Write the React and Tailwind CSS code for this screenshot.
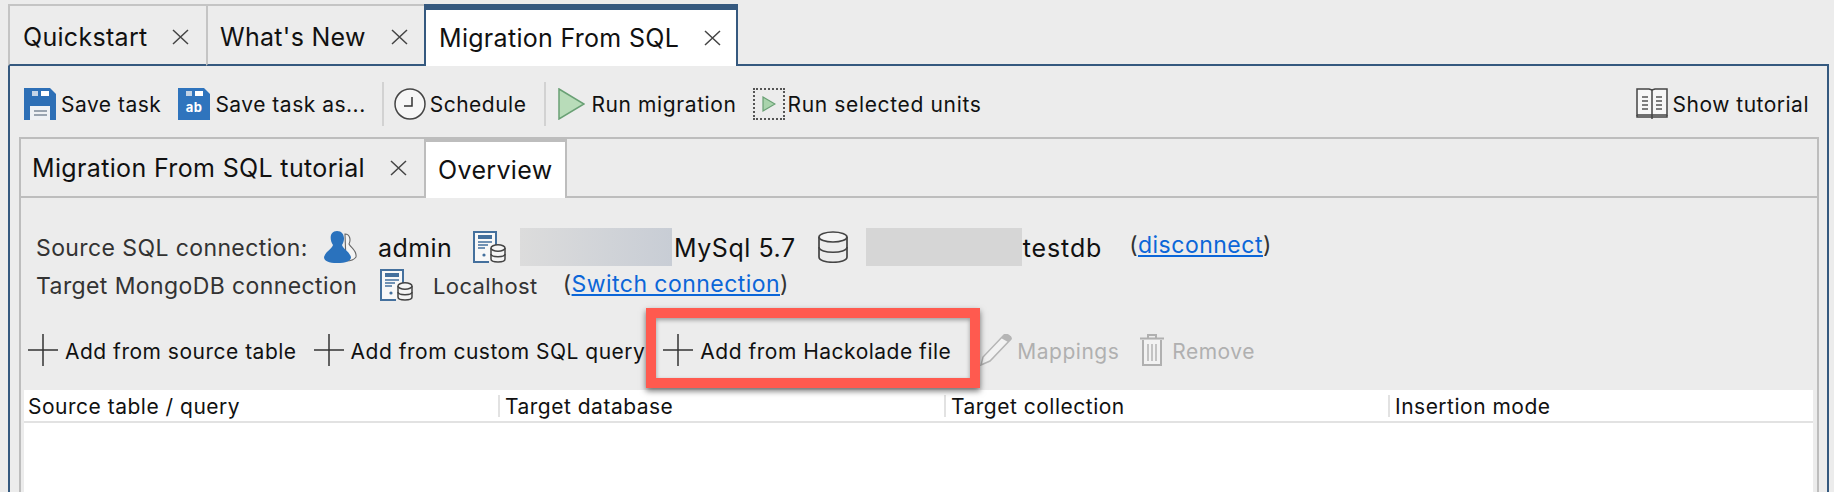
import React from "react";

function CloseIcon() {
  return (
    <svg width="17" height="16" viewBox="0 0 17 16" className="shrink-0">
      <path d="M1 1 L16 15 M16 1 L1 15" stroke="#444" strokeWidth="1.5" fill="none" />
    </svg>
  );
}

function SaveIcon({ ab }) {
  return (
    <svg width="32" height="32" viewBox="0 0 32 32" className="shrink-0">
      <path d="M0 0 H26 L32 6 V32 H0 Z" fill={ab ? "#2f74bd" : "#2d6fb6"} />
      <rect x="8" y="3" width="6" height="5" fill="#c4d4e6" />
      <rect x="17" y="3" width="8" height="5" fill="#fff" />
      {ab ? (
        <text x="16" y="24" textAnchor="middle" fontSize="13" fontWeight="700" fill="#fff" fontFamily="Inter, sans-serif">
          ab
        </text>
      ) : (
        <g>
          <rect x="6" y="18" width="20" height="14" fill="#eef1f5" />
          <path d="M10 23 H23 M10 27 H23" stroke="#7d8b9b" strokeWidth="1.4" />
        </g>
      )}
    </svg>
  );
}

function ClockIcon() {
  return (
    <svg width="32" height="32" viewBox="0 0 32 32" className="shrink-0">
      <circle cx="16" cy="16" r="15" fill="#f6f6f6" stroke="#444" strokeWidth="1.5" />
      <path d="M18 9 V18 H10" fill="none" stroke="#333" strokeWidth="1.5" />
    </svg>
  );
}

function PlayIcon() {
  return (
    <svg width="27" height="32" viewBox="0 0 27 32" className="shrink-0">
      <path d="M1 1 L26 16 L1 31 Z" fill="#b8dcb9" stroke="#69a074" strokeWidth="1.5" />
    </svg>
  );
}

function PlaySelectedIcon() {
  return (
    <div className="flex h-[32px] w-[32px] shrink-0 items-center justify-center border-2 border-dotted border-[#555]">
      <svg width="14" height="16" viewBox="0 0 14 16">
        <path d="M1 1 L13 8 L1 15 Z" fill="#a9d3ac" stroke="#69a074" strokeWidth="1.2" />
      </svg>
    </div>
  );
}

function BookIcon() {
  return (
    <svg width="32" height="32" viewBox="0 0 32 32" className="shrink-0">
      <path d="M1 1 H13 L16 2 L19 1 H31 V27 H1 Z" fill="#f7f7f7" stroke="#444" strokeWidth="1.5" />
      <path d="M16 2 V31" stroke="#444" strokeWidth="1.5" />
      <path d="M1 27 V29 H31 V27" fill="none" stroke="#444" strokeWidth="1.5" />
      <path d="M6 9 H12 M6 13 H12 M6 17 H12 M6 21 H12 M20 9 H26 M20 13 H26 M20 17 H26 M20 21 H26" stroke="#555" strokeWidth="1.5" />
    </svg>
  );
}

function UserIcon() {
  return (
    <svg width="33" height="32" viewBox="0 0 33 32" className="shrink-0">
      <path d="M21 3 C26 3 27 9 25 13 C27 17 33 19 32 26 C30 29 26 30 22 30 Z" fill="#f4f4f4" stroke="#666" strokeWidth="1.1" />
      <path d="M13 0 C20 0 22 8 18 14 C19 18 25 20 27 26 C27 30 22 32 13 32 C5 32 0 30 0 26 C2 20 8 18 9 14 C5 8 6 0 13 0 Z" fill="#2a72bd" />
    </svg>
  );
}

function ServerDbIcon() {
  return (
    <svg width="33" height="32" viewBox="0 0 33 32" className="shrink-0">
      <path d="M23 16 V1 H1 V31 H16" fill="#f8f8f8" stroke="#44709d" strokeWidth="2" />
      <rect x="5" y="4" width="14" height="4" fill="#44709d" />
      <path d="M5 11 H19 M5 14 H15 M5 17 H12" stroke="#44709d" strokeWidth="1.4" />
      <circle cx="11" cy="24" r="1.6" fill="#44709d" />
      <path d="M18 17 V28 C18 32 32 32 32 28 V17" fill="#f4f4f4" stroke="#444" strokeWidth="1.5" />
      <ellipse cx="25" cy="17" rx="7" ry="3.2" fill="#f4f4f4" stroke="#444" strokeWidth="1.5" />
      <path d="M18 23 C18 26.5 32 26.5 32 23" fill="none" stroke="#444" strokeWidth="1.5" />
    </svg>
  );
}

function DbIcon() {
  return (
    <svg width="30" height="32" viewBox="0 0 30 32" className="shrink-0">
      <path d="M1 6 V26 C1 33 29 33 29 26 V6" fill="none" stroke="#444" strokeWidth="1.7" />
      <ellipse cx="15" cy="6" rx="14" ry="5" fill="#f4f4f4" stroke="#444" strokeWidth="1.7" />
      <path d="M1 16 C1 23 29 23 29 16" fill="none" stroke="#444" strokeWidth="1.7" />
    </svg>
  );
}

function PlusIcon() {
  return (
    <svg width="30" height="32" viewBox="0 0 30 32" className="shrink-0">
      <path d="M15 0 V32 M0 16 H30" stroke="#333" strokeWidth="1.5" />
    </svg>
  );
}

function PencilIcon() {
  return (
    <svg width="32" height="32" viewBox="0 0 32 32" className="shrink-0">
      <path d="M24 1 C26 -1 32 3 31 5 L10 27 L1 31 L3 23 Z" fill="#f2f2f2" stroke="#b5b5b5" strokeWidth="1.5" />
      <path d="M24 1 C26 -1 32 3 31 5 L28 8 L21 4 Z" fill="#b5b5b5" />
    </svg>
  );
}

function TrashIcon() {
  return (
    <svg width="24" height="32" viewBox="0 0 24 32" className="shrink-0">
      <path d="M0 4.5 H24 M8 4 V1 H16 V4" fill="none" stroke="#b0b0b0" strokeWidth="2" />
      <path d="M3 6 V31 H21 V6" fill="#f2f2f2" stroke="#b0b0b0" strokeWidth="2" />
      <path d="M8 10 V27 M12 10 V27 M16 10 V27" stroke="#b0b0b0" strokeWidth="1.4" />
    </svg>
  );
}

function Blur({ className }) {
  return <div className={className} />;
}

export default function App() {
  return (
    <div className="h-[492px] w-full overflow-hidden bg-[#ececec] pl-[8px] pr-[5px] pt-[4px] [font-family:Inter,sans-serif] text-[#111]">
      {/* Outer tabs */}
      <div className="flex h-[62px] items-stretch text-[25px] tracking-[0.3px]">
        <div className="flex w-[198px] items-center border-b-2 border-l-2 border-t-2 border-b-[#35597f] border-l-[#c4c4c4] border-t-[#c4c4c4] pl-[13px]">
          <span className="pt-[5px]">Quickstart</span>
          <span className="ml-[25px] pt-[3px]"><CloseIcon /></span>
        </div>
        <div className="flex w-[218px] items-center border-b-2 border-l-2 border-t-2 border-b-[#35597f] border-l-[#c4c4c4] border-t-[#c4c4c4] pl-[12px]">
          <span className="pt-[5px]">What's New</span>
          <span className="ml-[25px] pt-[3px]"><CloseIcon /></span>
        </div>
        <div className="flex w-[314px] items-center border-l-2 border-r-2 border-t-[6px] border-[#35597f] bg-white pl-[13px]">
          <span className="pt-[2px]">Migration From SQL</span>
          <span className="ml-[25px]"><CloseIcon /></span>
        </div>
        <div className="flex-1 border-b-2 border-[#35597f]" />
      </div>

      {/* Panel */}
      <div className="h-[426px] border-l-2 border-r-2 border-[#35597f]">
        <div className="flex h-[71px] items-center pl-[14px] pr-[18px] pt-[4px] text-[21px] tracking-[0.5px]">
          <SaveIcon />
          <span className="ml-[5px] pt-[2px]">Save task</span>
          <span className="ml-[17px]"><SaveIcon ab /></span>
          <span className="ml-[5px] pt-[2px]">Save task as...</span>
          <div className="ml-[16px] h-[44px] w-[2px] bg-[#d2d2d2]" />
          <span className="ml-[10px]"><ClockIcon /></span>
          <span className="ml-[4px] pt-[2px]">Schedule</span>
          <div className="ml-[18px] h-[44px] w-[2px] bg-[#d2d2d2]" />
          <span className="ml-[12px]"><PlayIcon /></span>
          <span className="ml-[6px] pt-[2px] tracking-[0.6px]">Run migration</span>
          <span className="ml-[16px]"><PlaySelectedIcon /></span>
          <span className="ml-[3px] pt-[2px] tracking-[0.65px]">Run selected units</span>
          <span className="ml-auto"><BookIcon /></span>
          <span className="ml-[5px] pt-[2px]">Show tutorial</span>
        </div>

        {/* Inner panel */}
        <div className="ml-[9px] mr-[8px] h-[355px] border-l-2 border-r-2 border-t-2 border-[#bdbdbd]">
          <div className="flex h-[59px] items-stretch text-[25px] tracking-[0.35px]">
            <div className="flex w-[403px] items-center border-b-2 border-[#bdbdbd] pl-[11px]">
              <span className="whitespace-nowrap pt-[3px]">Migration From SQL tutorial</span>
              <span className="ml-[25px]"><CloseIcon /></span>
            </div>
            <div className="flex w-[143px] items-center border-l-2 border-r-2 border-t-[3px] border-[#bdbdbd] bg-white pl-[12px] pt-[2px]">
              Overview
            </div>
            <div className="flex-1 border-b-2 border-[#bdbdbd]" />
          </div>

          {/* Connections */}
          <div className="pl-[15px] pt-[30px] text-[23px] tracking-[0.4px]">
            <div className="flex h-[38px] items-center text-[#333]">
              <span className="w-[288px] whitespace-nowrap pt-[3px]">Source SQL connection:</span>
              <UserIcon />
              <span className="ml-[21px] w-[72px] pt-[3px] text-[25px] text-[#111]">admin</span>
              <span className="ml-[23px]"><ServerDbIcon /></span>
              <Blur className="ml-[14px] h-[38px] w-[152px] bg-linear-to-r from-[#dcdcdc] to-[#c8cdd5]" />
              <span className="ml-[2px] whitespace-nowrap pt-[3px] text-[25px] tracking-[0.55px] text-[#111]">MySql 5.7</span>
              <span className="ml-[22px]"><DbIcon /></span>
              <Blur className="ml-[18px] h-[38px] w-[156px] bg-[#d6d6d6]" />
              <span className="ml-[1px] pt-[3px] text-[25px] tracking-[0.9px] text-[#111]">testdb</span>
              <span className="mb-[4px] ml-[27px] tracking-[0.5px]">(<a className="text-[#0b66d8] underline">disconnect</a>)</span>
            </div>
            <div className="flex h-[38px] items-center text-[#333]">
              <span className="w-[344px] whitespace-nowrap pt-[2px]">Target MongoDB connection</span>
              <ServerDbIcon />
              <span className="ml-[20px] pt-[2px] text-[22px]">Localhost</span>
              <span className="mb-[2px] ml-[25px] tracking-[0.45px]">(<a className="text-[#0b66d8] underline">Switch connection</a>)</span>
            </div>
          </div>

          {/* Unit actions */}
          <div className="relative flex h-[86px] items-center pl-[7px] pt-[6px] text-[21px] tracking-[0.5px]">
            <PlusIcon />
            <span className="ml-[7px] whitespace-nowrap pt-[3px]">Add from source table</span>
            <span className="ml-[17px]"><PlusIcon /></span>
            <span className="ml-[7px] whitespace-nowrap pt-[3px]">Add from custom SQL query</span>
            <span className="ml-[18px]"><PlusIcon /></span>
            <span className="ml-[7px] whitespace-nowrap pt-[3px]">Add from Hackolade file</span>
            <span className="ml-[29px]"><PencilIcon /></span>
            <span className="ml-[5px] pt-[3px] text-[#b0b0b0]">Mappings</span>
            <span className="ml-[21px]"><TrashIcon /></span>
            <span className="ml-[8px] pt-[3px] text-[#b0b0b0]">Remove</span>
            {/* annotation */}
            <div className="absolute left-[625px] top-[4px] h-[80px] w-[334px] border-[10px] border-[#ff5a4f] shadow-[0_3px_6px_rgba(0,0,0,0.55),inset_0_2px_4px_rgba(0,0,0,0.35)]" />
          </div>

          {/* Table */}
          <div className="ml-[3px] mr-[4px] h-[102px] bg-white text-[21px] tracking-[0.5px]">
            <div className="flex h-[33px] items-center border-b-2 border-[#e2e2e2]">
              <div className="w-[474px] pl-[4px] pt-[3px]">Source table / query</div>
              <div className="h-[22px] w-[2px] bg-[#e2e2e2]" />
              <div className="w-[444px] pl-[5px] pt-[3px]">Target database</div>
              <div className="h-[22px] w-[2px] bg-[#e2e2e2]" />
              <div className="w-[442px] pl-[5px] pt-[3px]">Target collection</div>
              <div className="h-[22px] w-[2px] bg-[#e2e2e2]" />
              <div className="pl-[5px] pt-[3px]">Insertion mode</div>
            </div>
          </div>
        </div>
      </div>
    </div>
  );
}
